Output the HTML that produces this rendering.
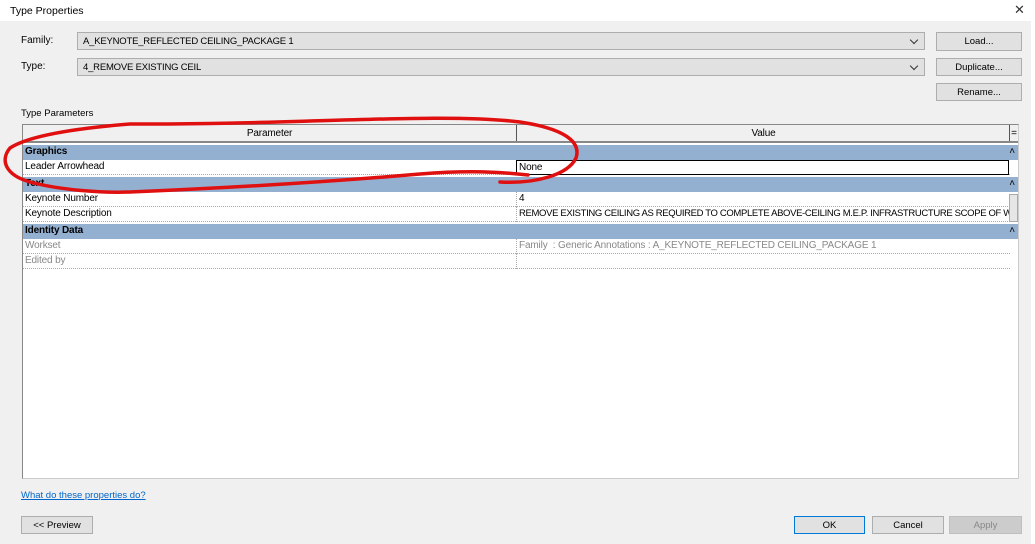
<!DOCTYPE html>
<html><head><style>
*{box-sizing:border-box;margin:0;padding:0}
body{width:1035px;height:544px;background:#fff;font-family:"Liberation Sans",sans-serif;font-size:10px;color:#000;position:relative;overflow:hidden}
.a{position:absolute}
.dlg{left:0;top:21px;width:1031px;height:523px;background:#f0f0f0}
.combo{background:#e1e1e1;border:1px solid #adadad;height:18px;padding:3px 5px;font-size:9.5px;letter-spacing:-0.2px}
.combo:after{content:"";position:absolute;right:7px;top:4px;width:5px;height:5px;border-right:1px solid #333;border-bottom:1px solid #333;transform:rotate(45deg)}
.btn{background:#e1e1e1;border:1px solid #adadad;text-align:center;font-size:9.5px;display:flex;align-items:center;justify-content:center}
.tbl{left:22px;top:124px;width:997px;height:355px;background:#fff;border:1px solid #888;border-right-color:#ccc;border-bottom-color:#ccc;overflow:hidden}
.row{position:absolute;left:0;width:987px;height:15px;line-height:14px;padding-left:2px;font-size:10px;letter-spacing:-0.15px}
.grp{background:#94b0d0;font-weight:bold;width:996px}
.grp:after{content:"\02C4";position:absolute;right:4px;top:0;font-weight:normal;font-size:10px}
.cell{border-bottom:1px dotted #aaa}
.v{position:absolute;left:493px;top:0;height:15px;border-left:1px dotted #aaa;padding-left:2px;width:493px;overflow:hidden;white-space:nowrap}
</style></head><body>
<div class="a" style="left:10px;top:5px;font-size:10.5px">Type Properties</div>
<div class="a" style="left:1014px;top:2px;font-size:13px;font-weight:100;color:#333">✕</div>
<div class="a dlg"></div>
<div class="a" style="left:21px;top:35px">Family:</div>
<div class="a" style="left:21px;top:61px">Type:</div>
<div class="a combo" style="left:77px;top:32px;width:848px">A_KEYNOTE_REFLECTED CEILING_PACKAGE 1</div>
<div class="a combo" style="left:77px;top:58px;width:848px">4_REMOVE EXISTING CEIL</div>
<div class="a btn" style="left:936px;top:32px;width:86px;height:19px">Load...</div>
<div class="a btn" style="left:936px;top:58px;width:86px;height:18px">Duplicate...</div>
<div class="a btn" style="left:936px;top:83px;width:86px;height:18px">Rename...</div>
<div class="a" style="left:21px;top:108px;font-size:9.5px">Type Parameters</div>
<div class="a tbl">
 <div class="row" style="top:0;height:18px;background:#f0f0f0;border-bottom:2px solid #888;width:995px;line-height:17px">
  <div class="a" style="left:0;width:493px;text-align:center">Parameter</div>
  <div class="a" style="left:493px;width:494px;text-align:center;border-left:1px solid #555;height:16px">Value</div>
  <div class="a" style="left:986px;width:9px;text-align:center;border-left:1px solid #555;height:16px">=</div>
 </div>
 <div class="row grp" style="top:20px">Graphics</div>
 <div class="row cell" style="top:35px">Leader Arrowhead<div class="v" style="border:1px solid #000;height:15px;top:0">None</div></div>
 <div class="row grp" style="top:52px">Text</div>
 <div class="row cell" style="top:67px">Keynote Number<div class="v">4</div></div>
 <div class="row cell" style="top:82px">Keynote Description<div class="v" style="font-size:9.5px;letter-spacing:-0.35px">REMOVE EXISTING CEILING AS REQUIRED TO COMPLETE ABOVE-CEILING M.E.P. INFRASTRUCTURE SCOPE OF WO</div></div>
 <div class="a" style="left:986px;top:69px;width:9px;height:28px;border:1px solid #aaa;background:#e6e6e6"></div>
 <div class="row grp" style="top:99px">Identity Data</div>
 <div class="row cell" style="top:114px;color:#888">Workset<div class="v">Family&nbsp; : Generic Annotations : A_KEYNOTE_REFLECTED CEILING_PACKAGE 1</div></div>
 <div class="row cell" style="top:129px;color:#888">Edited by<div class="v"></div></div>
</div>
<div class="a" style="left:21px;top:490px;color:#0066cc;text-decoration:underline;font-size:9.5px">What do these properties do?</div>
<div class="a btn" style="left:21px;top:516px;width:72px;height:18px">&lt;&lt; Preview</div>
<div class="a btn" style="left:794px;top:516px;width:71px;height:18px;border:1px solid #0078d7">OK</div>
<div class="a btn" style="left:872px;top:516px;width:72px;height:18px">Cancel</div>
<div class="a btn" style="left:949px;top:516px;width:73px;height:18px;background:#ccc;border-color:#bfbfbf;color:#888">Apply</div>
<svg class="a" style="left:0;top:0" width="1035" height="544"><path d="M500,182 C535,184 568,175 576,158 C582,140 560,128 520,122 C440,112 300,125 130,124 C80,128 30,135 10,148 C0,160 5,175 30,182 C60,190 100,193 130,192 C250,187 350,180 420,174 C470,170 500,172 528,175" fill="none" stroke="#e01010" stroke-width="3.5" stroke-linecap="round"/></svg>
</body></html>
